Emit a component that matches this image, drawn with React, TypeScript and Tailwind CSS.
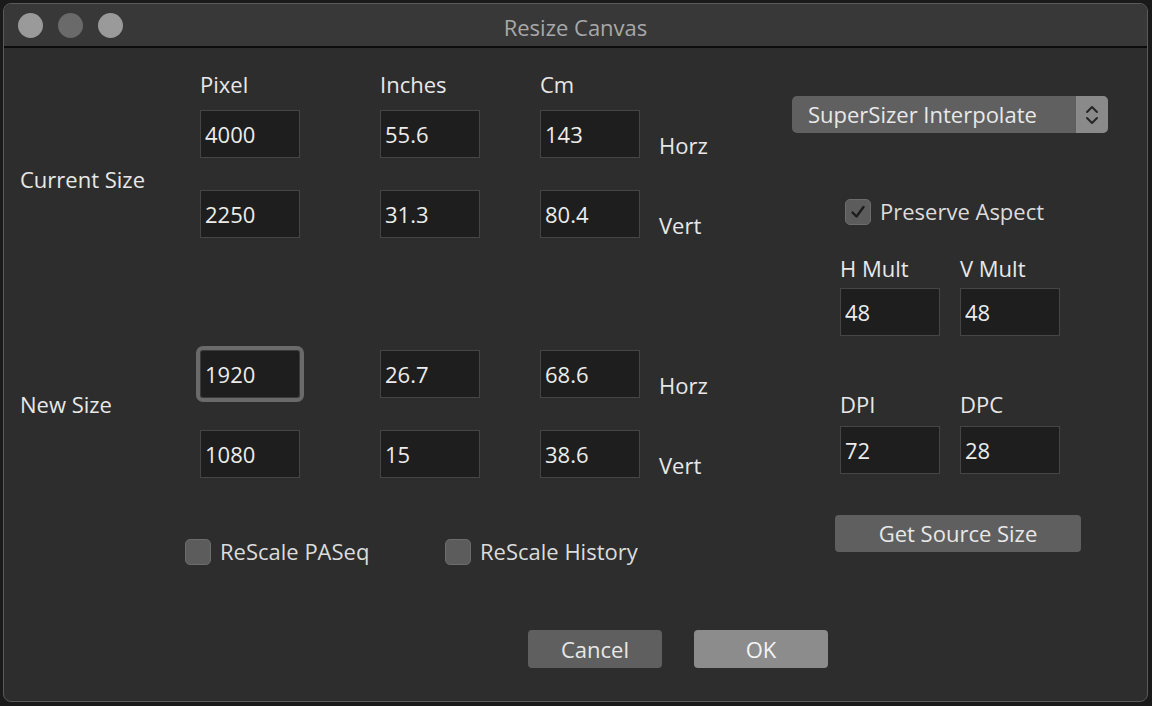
import React from "react"

const font = { fontFamily: '"Open Sans", "Liberation Sans", Arial, sans-serif' }

function Field({ value, focus = false }: { value: string; focus?: boolean }) {
  return (
    <div
      className={`w-[100px] h-[48px] shrink-0 bg-[#1e1e1e] flex items-center pl-[4px] text-[22px] text-[#ececec] ${
        focus ? "outline outline-[4px] outline-[#6a6a6a] rounded-[3px] border border-[#3a3a3a]" : "border border-[#454545]"
      }`}
    >
      {value}
    </div>
  )
}

function Row({ vals, side, focus = false }: { vals: string[]; side: string; focus?: boolean }) {
  return (
    <div className="flex items-start h-[48px]">
      <div className="ml-[196px]"><Field value={vals[0]} focus={focus} /></div>
      <div className="ml-[80px]"><Field value={vals[1]} /></div>
      <div className="ml-[60px]"><Field value={vals[2]} /></div>
      <div className="ml-[19px] mt-[22px] text-[22px] leading-[26px]">{side}</div>
    </div>
  )
}

function Check({ checked, label }: { checked?: boolean; label: string }) {
  return (
    <div className="flex items-center gap-[9px]">
      <div className="w-[26px] h-[26px] shrink-0 rounded-[5px] bg-[#5c5c5c] border border-[#6c6c6c] flex items-center justify-center">
        {checked && (
          <svg width="18" height="18" viewBox="0 0 18 18">
            <path d="M3.5 9.5 L7.5 13.5 L14.5 4" stroke="#1c1c1c" strokeWidth="2.4" fill="none" strokeLinecap="round" strokeLinejoin="round" />
          </svg>
        )}
      </div>
      <span className="text-[22px] text-[#dcdcdc] whitespace-nowrap">{label}</span>
    </div>
  )
}

export default function App() {
  return (
    <div className="w-[1152px] h-[706px] bg-[#1a1a1a] p-[3px]" style={font}>
      <div className="w-[1145px] h-[699px] rounded-[8px] border border-[#5a5a5a] bg-[#2d2d2d] overflow-hidden text-[#e8e8e8]">
        <div className="h-[44px] bg-[#383838] border-b-2 border-[#0c0c0c] flex items-center relative">
          <div className="flex gap-[15px] ml-[14px]">
            <div className="w-[25px] h-[25px] rounded-full bg-[#9a9a9a]" />
            <div className="w-[25px] h-[25px] rounded-full bg-[#6a6a6a]" />
            <div className="w-[25px] h-[25px] rounded-full bg-[#9a9a9a]" />
          </div>
          <div className="absolute inset-0 pt-[4px] flex items-center justify-center text-[22px] text-[#a8a8a8]">Resize Canvas</div>
        </div>
        <div className="flex">
          <div className="w-[785px] shrink-0 relative">
            <div className="flex mt-[20px] text-[22px] h-[42px]">
              <span className="ml-[196px] w-[180px]">Pixel</span>
              <span className="w-[160px]">Inches</span>
              <span>Cm</span>
            </div>
            <div className="absolute left-[16px] top-[115px] text-[22px]">Current Size</div>
            <div className="flex flex-col gap-[32px]">
              <Row vals={["4000", "55.6", "143"]} side="Horz" />
              <Row vals={["2250", "31.3", "80.4"]} side="Vert" />
            </div>
            <div className="absolute left-[16px] top-[340px] text-[22px]">New Size</div>
            <div className="flex flex-col gap-[32px] mt-[112px]">
              <Row vals={["1920", "26.7", "68.6"]} side="Horz" focus />
              <Row vals={["1080", "15", "38.6"]} side="Vert" />
            </div>
            <div className="flex mt-[57px] ml-[181px]">
              <div className="w-[260px]"><Check label="ReScale PASeq" /></div>
              <Check label="ReScale History" />
            </div>
            <div className="flex gap-[32px] ml-[524px] mt-[62px] text-[22px]">
              <button className="w-[134px] h-[38px] shrink-0 rounded-[4px] bg-[#5f5f5f] text-[#e8e8e8]">Cancel</button>
              <button className="w-[134px] h-[38px] shrink-0 rounded-[4px] bg-[#8c8c8c] text-[#f4f4f4]">OK</button>
            </div>
          </div>
          <div className="flex flex-col">
            <div className="mt-[48px] ml-[3px] w-[316px] h-[37px] rounded-[5px] bg-[#606060] flex items-center overflow-hidden text-[22px]">
              <span className="flex-1 pl-[16px] whitespace-nowrap overflow-hidden">SuperSizer Interpolate</span>
              <div className="w-[32px] h-full shrink-0 bg-[#8a8a8a] flex items-center justify-center">
                <svg width="14" height="24" viewBox="0 0 14 24">
                  <path d="M2 9 L7 4 L12 9 M2 15 L7 20 L12 15" stroke="#262626" strokeWidth="2" fill="none" strokeLinecap="round" strokeLinejoin="round" />
                </svg>
              </div>
            </div>
            <div className="ml-[56px] mt-[62px]"><Check checked label="Preserve Aspect" /></div>
            <div className="flex ml-[51px] mt-[20px] text-[22px] h-[40px] items-center">
              <span className="w-[120px]">H Mult</span>
              <span>V Mult</span>
            </div>
            <div className="flex gap-[20px] ml-[51px] mt-[0px]">
              <Field value="48" />
              <Field value="48" />
            </div>
            <div className="flex ml-[51px] mt-[46px] text-[22px] h-[44px] items-center">
              <span className="w-[120px]">DPI</span>
              <span>DPC</span>
            </div>
            <div className="flex gap-[20px] ml-[51px]">
              <Field value="72" />
              <Field value="28" />
            </div>
            <button className="ml-[46px] mt-[41px] w-[246px] h-[37px] rounded-[4px] bg-[#5f5f5f] text-[22px] text-[#e8e8e8]">Get Source Size</button>
          </div>
        </div>
      </div>
    </div>
  )
}
